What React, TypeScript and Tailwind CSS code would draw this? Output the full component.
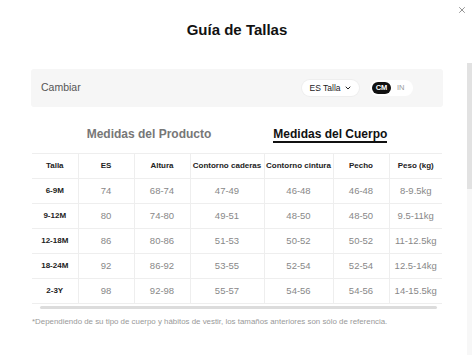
import { ChevronDown, X } from "lucide-react";

const columns = [
  { label: "Talla", width: "w-[46px]" },
  { label: "ES", width: "w-[56px]" },
  { label: "Altura", width: "w-[56px]" },
  { label: "Contorno caderas", width: "w-[74px]" },
  { label: "Contorno cintura", width: "w-[69px]" },
  { label: "Pecho", width: "w-[56px]" },
  { label: "Peso (kg)", width: "w-[53px]" },
];

const rows = [
  ["6-9M", "74", "68-74", "47-49", "46-48", "46-48", "8-9.5kg"],
  ["9-12M", "80", "74-80", "49-51", "48-50", "48-50", "9.5-11kg"],
  ["12-18M", "86", "80-86", "51-53", "50-52", "50-52", "11-12.5kg"],
  ["18-24M", "92", "86-92", "53-55", "52-54", "52-54", "12.5-14kg"],
  ["2-3Y", "98", "92-98", "55-57", "54-56", "54-56", "14-15.5kg"],
];

export default function App() {
  return (
    <div className="relative w-[474px] h-[361px] overflow-hidden bg-white font-['Liberation_Sans',Arial,sans-serif]">
      <button className="absolute top-[5px] right-[7px] text-[#555]">
        <X className="h-[10px] w-[10px]" strokeWidth={1.5} />
      </button>

      {/* modal scrollbar */}
      <div className="absolute top-[63px] right-[2px] w-[5px] h-[292px] bg-[#f7f7f7]">
        <div className="h-[126px] w-full bg-[#e2e2e2]" />
      </div>

      <h1 className="pt-[21px] text-center text-[15px] leading-[18px] font-bold text-[#111]">
        Guía de Tallas
      </h1>

      <div className="px-[31px]">
        <div className="mt-[30px] h-[38px] rounded-[3px] bg-[#f6f6f6] flex items-center pl-[10px] pr-[30px]">
          <span className="text-[10.5px] text-[#555]">Cambiar</span>
          <div className="ml-auto flex items-center gap-[11px]">
            <div className="h-[16px] w-[57px] rounded-full bg-white shadow-[0_0_0_1px_#eeeeee] flex items-center justify-center gap-[3px] text-[8.5px] text-[#222]">
              ES Talla
              <ChevronDown className="h-[8px] w-[8px]" strokeWidth={3} />
            </div>
            <div className="h-[16px] w-[43px] rounded-full bg-white flex items-center pl-[2px]">
              <span className="h-[12px] w-[19px] rounded-full bg-[#111] text-white text-[7.5px] font-bold flex items-center justify-center">
                CM
              </span>
              <span className="ml-[6px] text-[7.5px] text-[#999]">IN</span>
            </div>
          </div>
        </div>

        <div className="mt-[20px] flex justify-center gap-[62px] text-[12px] leading-[14px] font-bold">
          <span className="text-[#777]">Medidas del Producto</span>
          <span className="text-[#111] border-b-2 border-[#111]">Medidas del Cuerpo</span>
        </div>

        <table className="mt-[10px] ml-[1px] w-[410px] table-fixed border-collapse">
          <colgroup>
            {columns.map((c) => (
              <col key={c.label} className={c.width} />
            ))}
          </colgroup>
          <thead>
            <tr className="h-[25px] border-y border-[#eeeeee]">
              {columns.map((c, i) => (
                <th
                  key={c.label}
                  className={`p-0 text-[8px] font-bold text-[#222] whitespace-nowrap ${i > 0 ? "border-l border-[#eeeeee]" : ""}`}
                >
                  {c.label}
                </th>
              ))}
            </tr>
          </thead>
          <tbody>
            {rows.map((r) => (
              <tr key={r[0]} className="h-[25px] border-b border-[#eeeeee]">
                {r.map((cell, i) => (
                  <td
                    key={i}
                    className={
                      i === 0
                        ? "p-0 text-center text-[8px] font-bold text-[#222]"
                        : "p-0 text-center text-[9.5px] text-[#888] border-l border-[#eeeeee]"
                    }
                  >
                    {cell}
                  </td>
                ))}
              </tr>
            ))}
          </tbody>
        </table>

        <div className="mt-[2px] ml-[9px] h-[3px] w-[397px] rounded-full bg-[#dcdcdc]" />

        <p className="mt-[8px] ml-[1px] text-[7.9px] leading-[10px] text-[#999] whitespace-nowrap">
          *Dependiendo de su tipo de cuerpo y hábitos de vestir, los tamaños anteriores son sólo de referencia.
        </p>
      </div>
    </div>
  );
}
